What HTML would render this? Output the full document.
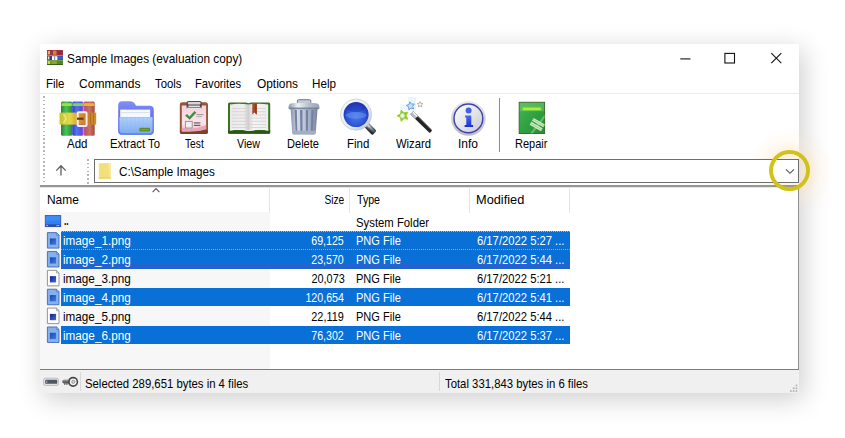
<!DOCTYPE html>
<html lang="en">
<head>
<meta charset="utf-8">
<title>Sample Images (evaluation copy)</title>
<style>
html,body{margin:0;padding:0;}
body{width:845px;height:438px;position:relative;overflow:hidden;background:#fff;
  font-family:"Liberation Sans",Arial,sans-serif;font-size:13px;line-height:13px;color:#000;}
.abs,.t,.sel,svg.i{position:absolute;}
.t{white-space:pre;display:block;}
#win{left:40px;top:44px;width:759px;height:349px;background:#fff;
  box-shadow:4px 6px 25px 0 rgba(0,0,0,.2);}
#glow{left:745.6px;top:126.5px;width:88px;height:88px;border-radius:50%;
  background:radial-gradient(closest-side,rgba(255,226,214,.4) 0,rgba(255,230,196,.5) 46%,rgba(255,236,210,.25) 68%,rgba(255,240,222,0) 100%);}
#menuline{left:40px;top:93px;width:759px;height:1px;background:#ececec;}
.grip{width:1.6px;background-image:repeating-linear-gradient(to bottom,#b6b6b6 0,#b6b6b6 1.6px,transparent 1.6px,transparent 3.85px);}
#tbsep{left:499px;top:98px;width:1px;height:54px;background:#8c8c8c;}
#addr{left:94px;top:159px;width:704.5px;height:23.5px;box-sizing:border-box;border:1px solid #6e6e6e;background:#fff;}
#listtop{left:40px;top:185.4px;width:759px;height:1.2px;background:#969696;}
#listtop2{left:40px;top:186.5px;width:759px;height:1px;background:#e6e6e6;}
#listright{left:798px;top:186px;width:1px;height:184px;background:#909090;}
#listbot{left:40px;top:369.2px;width:759px;height:1px;background:#7d7d7d;}
#namecol{left:40px;top:187px;width:229.5px;height:182px;background:#f7f7f7;}
#hdr{left:40px;top:187px;width:759px;height:25.4px;background:#fff;}
.cdiv{top:187px;width:1px;height:26px;background:#e5e5e5;}
.sel{left:61.3px;width:508.7px;background:#0870d6;}
#status{left:40px;top:370.2px;width:759px;height:22.8px;background:#f0f0f0;}
.sdiv{top:372px;width:1px;height:19px;background:#d7d7d7;}
#ring{left:769.3px;top:149.8px;width:40.6px;height:41.2px;box-sizing:border-box;border:4.5px solid #d0c216;border-radius:50%;}
</style>
</head>
<body>
<div id="win" class="abs"></div>
<div id="glow" class="abs"></div>

<!-- title bar -->
<svg class="i" style="left:47px;top:50px" width="16" height="15" viewBox="0 0 16 15">
  <rect x="0" y="0" width="16" height="5.2" fill="#a23344"/>
  <rect x="0.8" y="1" width="2.2" height="3.4" fill="#e9b43c"/>
  <rect x="6" y="0.6" width="3.4" height="4.2" fill="#d8802c"/>
  <rect x="11" y="1" width="4" height="3.6" fill="#94283e"/>
  <rect x="0" y="5.2" width="16" height="0.7" fill="#c43cc0"/>
  <rect x="0" y="5.9" width="16" height="4.3" fill="#3a3aa2"/>
  <rect x="11" y="6.2" width="5" height="3.6" fill="#3a5ec8"/>
  <rect x="5" y="6.2" width="5.4" height="3.8" fill="#fff"/>
  <rect x="7.2" y="6.4" width="1" height="3.4" fill="#777"/>
  <rect x="0.8" y="6.4" width="1.6" height="3" fill="#f0e6b0"/>
  <rect x="0" y="10.2" width="16" height="4.8" fill="#5a8a22"/>
  <rect x="0.8" y="11" width="2.4" height="3.2" fill="#d6d232"/>
  <rect x="4.4" y="11" width="5.5" height="3.2" fill="#8aa52c"/>
  <rect x="11.5" y="11" width="4" height="3.2" fill="#4c8a30"/>
  <rect x="0" y="14.3" width="16" height="0.7" fill="#2f4a18"/>
</svg>

<svg class="i" style="left:676px;top:48px" width="110" height="20" viewBox="0 0 110 20" fill="none" stroke="#111" stroke-width="1.1">
  <path d="M4.3 10.9h10.2"/>
  <rect x="48.9" y="5.4" width="9.6" height="9.6"/>
  <path d="M95.3 5.2l10 10M105.3 5.2l-10 10"/>
</svg>

<div id="menuline" class="abs"></div>

<!-- toolbar -->
<div class="abs grip" style="left:43.2px;top:96px;height:88px"></div>
<svg class="i" style="left:58px;top:99px" width="40" height="38" viewBox="0 0 40 38">
  <defs>
    <linearGradient id="agr" x1="0" x2="1" y1="0" y2="0"><stop offset="0" stop-color="#2a8038"/><stop offset=".45" stop-color="#4cc458"/><stop offset="1" stop-color="#2a8c3c"/></linearGradient>
    <linearGradient id="abl" x1="0" x2="1" y1="0" y2="0"><stop offset="0" stop-color="#3040c0"/><stop offset=".4" stop-color="#5474ee"/><stop offset=".8" stop-color="#5a50d8"/><stop offset="1" stop-color="#b84cc8"/></linearGradient>
    <linearGradient id="ard" x1="0" x2="1" y1="0" y2="0"><stop offset="0" stop-color="#c052c4"/><stop offset=".2" stop-color="#b85a5c"/><stop offset=".55" stop-color="#cc7264"/><stop offset="1" stop-color="#a04a44"/></linearGradient>
    <linearGradient id="abe" x1="0" x2="1" y1="0" y2="0"><stop offset="0" stop-color="#c2c232"/><stop offset=".28" stop-color="#e6d844"/><stop offset=".5" stop-color="#d8a02c"/><stop offset=".72" stop-color="#cc7a24"/><stop offset="1" stop-color="#c8902a"/></linearGradient>
  </defs>
  <rect x="3" y="2.500" width="11.200" height="34.300" rx="1.500" fill="url(#agr)"/>
  <rect x="14.200" y="2.500" width="11.200" height="34.300" rx="1.500" fill="url(#abl)"/>
  <rect x="25.400" y="2.500" width="11.300" height="34.300" rx="1.500" fill="url(#ard)"/>
  <rect x="3.400" y="4.200" width="10.400" height="2.800" fill="#a4de3c"/>
  <rect x="14.600" y="4.200" width="10.400" height="2.800" fill="#7cd458"/>
  <rect x="25.800" y="4.200" width="10.500" height="2.800" fill="#f0b42c"/>
  <rect x="1.600" y="13.600" width="36.600" height="12" fill="url(#abe)"/>
  <path d="M5.500 15.400q4.600 4.200 0 8.400" fill="none" stroke="#f2ec84" stroke-width="1.800" opacity=".8"/>
  <path d="M29.500 14v11.200M32.500 14v11.200M35.500 14v11.200" stroke="#a85c1c" stroke-width="1" opacity=".55"/>
  <rect x="19.700" y="13.200" width="8.900" height="13.800" rx="1" fill="none" stroke="#f8eef4" stroke-width="2"/>
  <rect x="19" y="18.600" width="6.600" height="2.200" fill="#6a3c1c"/>
</svg>

<svg class="i" style="left:116px;top:99px" width="40" height="38" viewBox="0 0 40 38">
  <defs>
    <linearGradient id="efr" x1="0" x2="0" y1="0" y2="1"><stop offset="0" stop-color="#b2d2fa"/><stop offset="1" stop-color="#7aa8f0"/></linearGradient>
    <linearGradient id="eba" x1="0" x2="0" y1="0" y2="1"><stop offset="0" stop-color="#8290f6"/><stop offset=".35" stop-color="#6a76f0"/><stop offset="1" stop-color="#6470ec"/></linearGradient>
  </defs>
  <path d="M2.200 6.200q0-4 4-4h8.500q3 0 4.400 2.800l.9 1.800H33.800q4 0 4 4V31.700q0 4-4 4H6.200q-4 0-4-4z" fill="url(#eba)"/>
  <rect x="4.200" y="10.600" width="30" height="9.400" fill="#f6f9ff"/>
  <rect x="4.200" y="13.200" width="30" height=".9" fill="#d2def4"/>
  <path d="M2.200 17.900h35.600V31.700q0 4-4 4H6.200q-4 0-4-4z" fill="url(#efr)"/>
  <path d="M2.200 17.900h35.600v1.200H2.200z" fill="#a4c4f6"/>
  <path d="M7 19v15M11 19v15M15 19v15M19 19v15M23 19v10M27 19v10M31 19v10M35 19v10" stroke="#8fb6f2" stroke-width=".8" opacity=".55"/>
  <rect x="23.800" y="29.300" width="9.800" height="2.600" rx=".5" fill="#78ac1c" stroke="#466e12" stroke-width=".7"/>
  <path d="M2.200 31.700q0 4 4 4h27.600q4 0 4-4V18h-1.300V31.200q0 3-3 3H6.500q-3 0-3-3V18H2.200z" fill="#6472ea" opacity=".85"/>
</svg>

<svg class="i" style="left:177px;top:99px" width="34" height="38" viewBox="0 0 34 38">
  <defs>
    <linearGradient id="tpa" x1="0" x2="0" y1="0" y2="1"><stop offset="0" stop-color="#f6d2dc"/><stop offset=".7" stop-color="#fae4ea"/><stop offset="1" stop-color="#f0b6c6"/></linearGradient>
  </defs>
  <rect x="2.800" y="3.300" width="28.200" height="31.700" rx="2.600" fill="#96563a"/>
  <rect x="2.800" y="31" width="28.200" height="4" rx="2" fill="#7c4228"/>
  <path d="M4.800 6.500h24.300v23.600q-6.500 2.500-14.500 1.900l-9.800.6z" fill="url(#tpa)"/>
  <path d="M4.800 28.400q10 3.400 24.300-2.400v4.100q-8.500 3.300-24.300 2.500z" fill="#e9a4b8"/>
  <path d="M9.600 3.800q0-1.800 1.800-1.800h11.500q1.800 0 1.800 1.800V10H9.600z" fill="#55474a"/>
  <rect x="10.800" y="3" width="12.700" height="2.400" rx=".8" fill="#d8d4da"/>
  <rect x="11.400" y="6.600" width="11.500" height="1.300" fill="#f4f0f4"/>
  <rect x="9.600" y="8.600" width="15.100" height="1.400" fill="#e6dfe4"/>
  <path d="M8.300 16.600l1.700-1.500 2.500 2.300 5-5.400 1.700 1.400-6.500 7z" fill="#2a9a38"/>
  <path d="M8.300 16.600l4.400 3.800 6.500-7" fill="none" stroke="#6a3a2a" stroke-width=".5" opacity=".6"/>
  <rect x="19.400" y="15.100" width="7" height="1" fill="#9a9296"/>
  <rect x="19.400" y="17.100" width="5.600" height="1" fill="#b4acb0"/>
  <rect x="8.400" y="22.400" width="6.800" height="6.600" fill="#f4eef0" stroke="#958d92" stroke-width=".9"/>
  <rect x="16.800" y="23.400" width="6.600" height="1.100" fill="#5a5056"/>
  <rect x="16.800" y="25.800" width="6.600" height="1.100" fill="#5a5056"/>
</svg>

<svg class="i" style="left:226px;top:99px" width="46" height="38" viewBox="0 0 46 38">
  <defs>
    <linearGradient id="vpl" x1="0" x2="1" y1="0" y2="0"><stop offset="0" stop-color="#e9e9e9"/><stop offset=".7" stop-color="#efefef"/><stop offset="1" stop-color="#c9c9c9"/></linearGradient>
    <linearGradient id="vpr" x1="0" x2="1" y1="0" y2="0"><stop offset="0" stop-color="#d2d2d2"/><stop offset=".25" stop-color="#f4f4f4"/><stop offset="1" stop-color="#ededed"/></linearGradient>
  </defs>
  <path d="M2 5q0-1.500 1.500-1.500H20l2.600.7 2.600-.7H42.700q1.500 0 1.500 1.500V33.200q0 1.500-1.500 1.500H3.500q-1.500 0-1.500-1.500z" fill="#3c7222"/>
  <path d="M2 31.400h42.200v1.800q0 1.500-1.500 1.500H3.500q-1.500 0-1.500-1.500z" fill="#2a5616"/>
  <path d="M4 5.400q9.300-1.500 19 .2V32q-9.700-2.200-19-.6z" fill="url(#vpl)"/>
  <path d="M22.600 5.600q9.800-1.700 19.600-.2V31.400q-9.800-1.600-19.600.6z" fill="url(#vpr)"/>
  <path d="M4 30.600q9.300-1.600 18.600.6 9.800-2.200 19.600-.6v.8q-9.800-1.600-19.600.6-9.300-2.200-18.600-.6z" fill="#fafafa"/>
  <g stroke="#d0d0d0" stroke-width=".8">
    <path d="M6 9.500h14.600M6 12.700h14.600M6 15.900h14.600M6 19.100h14.600M6 22.300h14.600M6 25.500h14.600M6 28.500h14.600"/>
    <path d="M25 9.500h15M25 12.700h15M25 15.900h15M25 19.100h15M25 22.300h15M25 25.500h15M25 28.500h15"/>
  </g>
  <path d="M26.300 4.400h4.400v11.200l-2.200-2.200-2.200 2.200z" fill="#a8482a"/>
  <path d="M29.300 4.400h1.400v11.200l-1.400-1.400z" fill="#8a3418"/>
</svg>

<svg class="i" style="left:286px;top:97px" width="36" height="40" viewBox="0 0 36 40">
  <defs>
    <linearGradient id="dbo" x1="0" x2="1" y1="0" y2="0"><stop offset="0" stop-color="#8692aa"/><stop offset=".25" stop-color="#d4dae8"/><stop offset=".6" stop-color="#b4bdd0"/><stop offset="1" stop-color="#77839b"/></linearGradient>
    <linearGradient id="dli" x1="0" x2="1" y1="0" y2="0"><stop offset="0" stop-color="#8e98ac"/><stop offset=".3" stop-color="#eef1f6"/><stop offset=".65" stop-color="#b8c0d0"/><stop offset="1" stop-color="#98a2b6"/></linearGradient>
  </defs>
  <rect x="11.400" y="2.700" width="13.400" height="4" rx="1.200" fill="#c4cad6" stroke="#6e788c" stroke-width="1"/>
  <path d="M4.600 11.600h27L29.800 35q-.2 2.600-2.800 2.600H9q-2.600 0-2.800-2.600z" fill="url(#dbo)"/>
  <g fill="#7382a0">
    <path d="M8.600 13h2.200l.5 21H9.600z"/>
    <path d="M14 13h2.400l.1 21h-2.100z"/>
    <path d="M19.800 13h2.400l-.3 21h-2z"/>
    <path d="M25.400 13h2.300l-.9 21h-1.900z"/>
  </g>
  <path d="M6.100 33.800h23.800l-.1 1.200q-.2 2.600-2.800 2.600H9q-2.600 0-2.800-2.600z" fill="#a4aec2"/>
  <path d="M2.600 9.400q0-3.400 6-3.400h18.800q6 0 6 3.400v1.400q0 1.400-1.400 1.400H4q-1.400 0-1.400-1.400z" fill="url(#dli)"/>
  <path d="M2.600 10.400q0 1.800 1.400 1.800h28q1.400 0 1.400-1.800z" fill="#6f7b92" opacity=".85"/>
</svg>

<svg class="i" style="left:338px;top:97px" width="42" height="42" viewBox="0 0 42 42">
  <defs>
    <radialGradient id="fle" cx=".5" cy=".58" r=".6"><stop offset="0" stop-color="#4a7ce8"/><stop offset=".6" stop-color="#2e56d8"/><stop offset="1" stop-color="#1c2cac"/></radialGradient>
    <linearGradient id="fri" x1="0" x2="1" y1="0" y2="1"><stop offset="0" stop-color="#fafcfc"/><stop offset=".6" stop-color="#e4eaec"/><stop offset="1" stop-color="#b4c0c6"/></linearGradient>
    <linearGradient id="fha" x1="0" x2="0" y1="0" y2="1"><stop offset="0" stop-color="#6a747a"/><stop offset=".35" stop-color="#dfe5e8"/><stop offset=".7" stop-color="#59636a"/><stop offset="1" stop-color="#1e2428"/></linearGradient>
    <linearGradient id="fhe" x1="0" x2="1" y1="0" y2="0"><stop offset="0" stop-color="#000" stop-opacity="0"/><stop offset="1" stop-color="#101418" stop-opacity=".75"/></linearGradient>
  </defs>
  <g transform="translate(27.300 26.800) rotate(45)">
    <rect x="0" y="-3" width="13" height="6" rx="1.600" fill="url(#fha)"/>
    <rect x="4" y="-3" width="9" height="6" rx="1.600" fill="url(#fhe)"/>
  </g>
  <circle cx="18.100" cy="17.600" r="15.600" fill="url(#fri)" stroke="#c0c8cc" stroke-width=".7"/>
  <circle cx="18.100" cy="17.600" r="12.500" fill="url(#fle)"/>
  <ellipse cx="18.100" cy="10.500" rx="9" ry="4.500" fill="#1e30b0" opacity=".45"/>
  <ellipse cx="18.100" cy="18.300" rx="10.500" ry="3.400" fill="#6c9af0" opacity=".5"/>
</svg>

<svg class="i" style="left:394px;top:97px" width="42" height="40" viewBox="0 0 42 40">
  <defs>
    <radialGradient id="wgs" cx=".5" cy=".5" r=".5"><stop offset="0" stop-color="#ffffff"/><stop offset=".3" stop-color="#d8f4c4"/><stop offset=".62" stop-color="#62c444"/><stop offset="1" stop-color="#a6d424"/></radialGradient>
  </defs>
  <rect x="14" y="0" width="8" height="13.500" fill="#e4f8fc"/>
  <rect x="6" y="7.500" width="8" height="6" fill="#e9f9fb"/>
  <path d="M16.300 17.200l2.900-2.900 18.300 18.100q.9 1-.2 2.200l-.6.600q-1.100.9-2.100-.100z" fill="#232325"/>
  <path d="M16.300 17.200l2.900-2.900 4.700 4.700-2.900 2.900z" fill="#b9bec4"/>
  <path d="M18.500 15.700l.9-.9 4.400 4.400-.9.900z" fill="#ffffff" opacity=".9"/>
  <path d="M23.600 19.800l.8-.8 13 12.900-.8.800z" fill="#8a8a8e" opacity=".55"/>
  <path d="M3.00 18.70L6.57 16.94L7.15 12.99L9.93 15.85L13.85 15.17L12.00 18.70L13.85 22.23L9.93 21.55L7.15 24.41L6.57 20.46z" fill="url(#wgs)" stroke="#a2d026" stroke-width="1" stroke-linejoin="round"/>
  <path d="M15.85 4.77L17.52 7.11L20.40 6.98L18.68 9.29L19.69 11.99L16.96 11.07L14.72 12.86L14.75 9.99L12.34 8.40L15.09 7.54z" fill="#b6e6fc" stroke="#8496e6" stroke-width="1" stroke-linejoin="round"/>
  <path d="M26.10 4.50L26.95 6.33L28.95 6.57L27.48 7.95L27.86 9.93L26.10 8.95L24.34 9.93L24.72 7.95L23.25 6.57L25.25 6.33z" fill="#fbf7f3" stroke="#b6a696" stroke-width=".85" stroke-linejoin="round"/>
</svg>

<svg class="i" style="left:449px;top:98.700px" width="40" height="40" viewBox="0 0 40 40">
  <defs>
    <linearGradient id="iou" x1="0" x2="0" y1="0" y2="1"><stop offset="0" stop-color="#e8e8ee"/><stop offset="1" stop-color="#bcbcc8"/></linearGradient>
    <linearGradient id="iin" x1="0" x2="1" y1="0" y2="1"><stop offset="0" stop-color="#ffffff"/><stop offset=".45" stop-color="#e6e8ec"/><stop offset="1" stop-color="#c6c8d2"/></linearGradient>
    <linearGradient id="iii" x1="0" x2="0" y1="0" y2="1"><stop offset="0" stop-color="#4a68f0"/><stop offset="1" stop-color="#1c2cd0"/></linearGradient>
  </defs>
  <circle cx="19.400" cy="19.400" r="17.300" fill="url(#iou)"/>
  <circle cx="19.400" cy="19.400" r="14.400" fill="url(#iin)" stroke="#4040ac" stroke-width="1.400"/>
  <circle cx="19.600" cy="11.400" r="3" fill="#4460ea"/>
  <path d="M16.100 16.400h6.200v9.500h1.800v2.100h-8.500v-2.100h1.700v-7.400h-1.200z" fill="url(#iii)"/>
</svg>

<div id="tbsep" class="abs"></div>
<svg class="i" style="left:517px;top:100px" width="30" height="36" viewBox="0 0 30 36">
  <defs>
    <linearGradient id="rbg" x1="0" x2="1" y1="0" y2="1"><stop offset="0" stop-color="#44b650"/><stop offset=".55" stop-color="#2fa042"/><stop offset="1" stop-color="#278c38"/></linearGradient>
  </defs>
  <rect x="2.200" y="2.300" width="25.400" height="31.200" fill="url(#rbg)" stroke="#3a6c2a" stroke-width="1"/>
  <rect x="2.700" y="2.800" width="24.400" height="8.400" fill="#7cc878" opacity=".45"/>
  <rect x="4.600" y="6.800" width="20.400" height="4.200" rx="2.100" fill="#8ee03a" opacity=".45"/>
  <rect x="5.800" y="7.700" width="18" height="2.400" rx="1.200" fill="#aaf030"/>
  <path d="M13 33.500l14.600-19v3.600L15.800 33.500z" fill="#6cc46c" opacity=".85"/>
  <g transform="rotate(30 20.300 24.600)">
    <rect x="13.800" y="20.600" width="13" height="3.400" fill="#cfe8c0"/>
    <rect x="13.800" y="25.200" width="13" height="3.400" fill="#cfe8c0"/>
    <path d="M13.800 22.300h13M13.800 26.900h13" stroke="#9cc890" stroke-width=".7"/>
  </g>
</svg>


<!-- address row -->
<div class="abs grip" style="left:87.4px;top:158.6px;height:25.5px"></div>
<svg class="i" style="left:54px;top:163px" width="14" height="14" viewBox="0 0 14 14" fill="none" stroke="#5f5f5f" stroke-width="1.3">
  <path d="M7 12.6V2.6M2.3 7.6L7 2.7l4.7 4.9"/>
</svg>
<div id="addr" class="abs"></div>
<svg class="i" style="left:98px;top:162px" width="15" height="18" viewBox="0 0 15 18">
  <path d="M0.8 1.2h9.2l3 0v15.4H0.8z" fill="#f3df7c"/>
  <path d="M10.2 1.2h2.8v15.4h-1.4V9z" fill="#f8ecaa"/>
  <path d="M0.8 15.6h12.2v1H0.8z" fill="#e6cf5e"/>
</svg>
<svg class="i" style="left:783px;top:166px" width="14" height="10" viewBox="0 0 14 10" fill="none" stroke="#555" stroke-width="1.15">
  <path d="M3 3.300L7 7.300l4-4"/>
</svg>

<!-- list -->
<div id="namecol" class="abs"></div>
<div id="hdr" class="abs"></div>
<div id="listtop2" class="abs"></div>
<div id="listtop" class="abs"></div>
<div id="listright" class="abs"></div>
<div id="listbot" class="abs"></div>
<div class="abs cdiv" style="left:269px"></div>
<div class="abs cdiv" style="left:349px"></div>
<div class="abs cdiv" style="left:469px"></div>
<div class="abs cdiv" style="left:569px"></div>
<svg class="i" style="left:150.700px;top:187.200px" width="10" height="7" viewBox="0 0 10 7" fill="none" stroke="#5c5c5c" stroke-width="1.150">
  <path d="M1.600 5.200L5 1.700l3.400 3.500"/>
</svg>
<div class="sel" style="top:231.32px;height:18.87px"></div>
<div class="sel" style="top:250.19px;height:18.30px"></div>
<div class="sel" style="top:287.93px;height:18.30px"></div>
<div class="sel" style="top:325.67px;height:18.30px"></div>
<div class="abs" style="left:61.3px;top:263.8px;width:508.7px;height:5.2px;background:#2462d0;"></div>
<div class="abs" style="left:61.3px;top:231.3px;width:508.7px;height:0;border-top:1px dotted #8fc0ee;"></div>
<div class="abs" style="left:61.3px;top:249.2px;width:508.7px;height:0;border-top:1px dotted #5fd08a;"></div>
<svg class="i" style="left:40px;top:210px" width="30" height="140" viewBox="40 210 30 140">
<defs><linearGradient id="lsq" x1="0" x2="1" y1="0" y2="1"><stop offset="0" stop-color="#16208a"/><stop offset="1" stop-color="#3f6ed8"/></linearGradient>
<linearGradient id="lsq2" x1="0" x2="1" y1="0" y2="1"><stop offset="0" stop-color="#1c46b0"/><stop offset="1" stop-color="#3f7ce0"/></linearGradient></defs>
<rect x="45.300" y="215.600" width="15.400" height="11" fill="#2f80f0" stroke="#3452b4" stroke-width=".9"/>
<rect x="45.800" y="216.100" width="14.400" height="4.500" fill="#3f8cf4"/>
<rect x="45.300" y="224.400" width="15.400" height="2.200" fill="#2c48a8"/>
<rect x="46.500" y="225" width="1.200" height="1" fill="#dfe8ff"/><rect x="56.600" y="225" width="1" height="1" fill="#dfe8ff"/><rect x="58.200" y="225" width="1" height="1" fill="#dfe8ff"/>
<path d="M47.4 232.62H56.40L59.0 235.22V248.12H47.4z" fill="#84b2ec" stroke="#4468bc" stroke-width=".9"/>
<path d="M56.40 232.62V235.22H59.0z" fill="#acccf4" stroke="#4468bc" stroke-width=".6"/>
<rect x="49.900" y="238.42" width="6.200" height="6.300" fill="url(#lsq2)"/>
<path d="M47.4 251.49H56.40L59.0 254.09V266.99H47.4z" fill="#84b2ec" stroke="#4468bc" stroke-width=".9"/>
<path d="M56.40 251.49V254.09H59.0z" fill="#acccf4" stroke="#4468bc" stroke-width=".6"/>
<rect x="49.900" y="257.29" width="6.200" height="6.300" fill="url(#lsq2)"/>
<path d="M47.4 270.36H56.40L59.0 272.96V285.86H47.4z" fill="#ffffff" stroke="#8a8a8a" stroke-width=".9"/>
<path d="M56.40 270.36V272.96H59.0z" fill="#e4e4e4" stroke="#8a8a8a" stroke-width=".6"/>
<rect x="49.900" y="276.16" width="6.200" height="6.300" fill="url(#lsq)"/>
<path d="M47.4 289.23H56.40L59.0 291.83V304.73H47.4z" fill="#84b2ec" stroke="#4468bc" stroke-width=".9"/>
<path d="M56.40 289.23V291.83H59.0z" fill="#acccf4" stroke="#4468bc" stroke-width=".6"/>
<rect x="49.900" y="295.03" width="6.200" height="6.300" fill="url(#lsq2)"/>
<path d="M47.4 308.10H56.40L59.0 310.70V323.60H47.4z" fill="#ffffff" stroke="#8a8a8a" stroke-width=".9"/>
<path d="M56.40 308.10V310.70H59.0z" fill="#e4e4e4" stroke="#8a8a8a" stroke-width=".6"/>
<rect x="49.900" y="313.90" width="6.200" height="6.300" fill="url(#lsq)"/>
<path d="M47.4 326.97H56.40L59.0 329.57V342.47H47.4z" fill="#84b2ec" stroke="#4468bc" stroke-width=".9"/>
<path d="M56.40 326.97V329.57H59.0z" fill="#acccf4" stroke="#4468bc" stroke-width=".6"/>
<rect x="49.900" y="332.77" width="6.200" height="6.300" fill="url(#lsq2)"/>
</svg>


<!-- status bar -->
<div id="status" class="abs"></div>
<div class="abs sdiv" style="left:80.3px"></div>
<div class="abs sdiv" style="left:439.2px"></div>
<svg class="i" style="left:42px;top:374px" width="40" height="16" viewBox="42 374 40 16">
  <rect x="43.600" y="378.200" width="14.800" height="7.200" rx="1.600" fill="#e6e6ea" stroke="#b4b6be" stroke-width=".9"/>
  <rect x="45.200" y="379.800" width="12" height="4" rx=".6" fill="#4e565e"/>
  <rect x="46" y="380.600" width="1.400" height="2.400" fill="#8a949c"/>
  <rect x="62.300" y="379.700" width="8" height="3.800" rx="1.700" fill="#5a5a5a"/>
  <rect x="63" y="380.300" width="6.500" height="1" fill="#a4a4a4"/>
  <path d="M64 383.300h1.400v1.500H64zM66.200 383.300h1.500v1.500h-1.500z" fill="#5a5a5a"/>
  <circle cx="73.100" cy="381.800" r="5.100" fill="#484848"/>
  <circle cx="73.200" cy="381.800" r="3.400" fill="#f6f6f6"/>
  <circle cx="73.300" cy="381.800" r="1.600" fill="#cfcfcf" stroke="#8c8c8c" stroke-width=".8"/>
</svg>
<svg class="i" style="left:788px;top:383px" width="10" height="10" viewBox="0 0 10 10" fill="#b4b4b4">
  <rect x="7.600" y="1.600" width="1.700" height="1.700"/>
  <rect x="4.800" y="4.400" width="1.700" height="1.700"/><rect x="7.600" y="4.400" width="1.700" height="1.700"/>
  <rect x="2" y="7.200" width="1.700" height="1.700"/><rect x="4.800" y="7.200" width="1.700" height="1.700"/><rect x="7.600" y="7.200" width="1.700" height="1.700"/>
</svg>


<span class="t" style="left:67.48px;top:52.00px;transform:scaleX(0.9083);transform-origin:0 0;">Sample Images (evaluation copy)</span>
<span class="t" style="left:45.58px;top:77.00px;transform:scaleX(0.8827);transform-origin:0 0;">File</span>
<span class="t" style="left:78.50px;top:77.00px;transform:scaleX(0.9252);transform-origin:0 0;">Commands</span>
<span class="t" style="left:154.50px;top:77.00px;transform:scaleX(0.8729);transform-origin:0 0;">Tools</span>
<span class="t" style="left:194.58px;top:77.00px;transform:scaleX(0.8603);transform-origin:0 0;">Favorites</span>
<span class="t" style="left:257.00px;top:77.00px;transform:scaleX(0.9149);transform-origin:0 0;">Options</span>
<span class="t" style="left:312.48px;top:77.00px;transform:scaleX(0.8972);transform-origin:0 0;">Help</span>
<span class="t" style="left:67.00px;top:137.00px;transform:scaleX(0.8859);transform-origin:0 0;">Add</span>
<span class="t" style="left:109.58px;top:137.00px;transform:scaleX(0.8686);transform-origin:0 0;">Extract To</span>
<span class="t" style="left:185.00px;top:137.00px;transform:scaleX(0.7864);transform-origin:0 0;">Test</span>
<span class="t" style="left:237.00px;top:137.00px;transform:scaleX(0.8228);transform-origin:0 0;">View</span>
<span class="t" style="left:287.48px;top:137.00px;transform:scaleX(0.8516);transform-origin:0 0;">Delete</span>
<span class="t" style="left:347.48px;top:137.00px;transform:scaleX(0.8811);transform-origin:0 0;">Find</span>
<span class="t" style="left:396.00px;top:137.00px;transform:scaleX(0.8652);transform-origin:0 0;">Wizard</span>
<span class="t" style="left:458.48px;top:137.00px;transform:scaleX(0.9222);transform-origin:0 0;">Info</span>
<span class="t" style="left:514.58px;top:137.00px;transform:scaleX(0.8486);transform-origin:0 0;">Repair</span>
<span class="t" style="left:118.75px;top:165.30px;transform:scaleX(0.8954);transform-origin:0 0;">C:\Sample Images</span>
<span class="t" style="left:46.58px;top:193.00px;transform:scaleX(0.9177);transform-origin:0 0;">Name</span>
<span class="t" style="left:318.97px;top:193.00px;transform:scaleX(0.7846);transform-origin:100% 0;">Size</span>
<span class="t" style="left:357.00px;top:193.00px;transform:scaleX(0.8160);transform-origin:0 0;">Type</span>
<span class="t" style="left:476.25px;top:193.00px;transform:scaleX(0.9821);transform-origin:0 0;">Modified</span>
<span class="t" style="left:64.10px;top:214.25px;transform:scaleX(0.6359);transform-origin:0 0;font-weight:700;">..</span>
<span class="t" style="left:356.48px;top:215.55px;transform:scaleX(0.8710);transform-origin:0 0;">System Folder</span>
<span class="t" style="left:63.03px;top:234.42px;transform:scaleX(0.9004);transform-origin:0 0;color:#fff;">image_1.png</span>
<span class="t" style="left:303.98px;top:234.42px;transform:scaleX(0.8173);transform-origin:100% 0;color:#fff;">69,125</span>
<span class="t" style="left:356.48px;top:234.42px;transform:scaleX(0.8500);transform-origin:0 0;color:#fff;">PNG File</span>
<span class="t" style="left:476.73px;top:234.42px;transform:scaleX(0.8646);transform-origin:0 0;color:#fff;">6/17/2022 5:27 ...</span>
<span class="t" style="left:63.03px;top:253.29px;transform:scaleX(0.9004);transform-origin:0 0;color:#fff;">image_2.png</span>
<span class="t" style="left:303.98px;top:253.29px;transform:scaleX(0.8173);transform-origin:100% 0;color:#fff;">23,570</span>
<span class="t" style="left:356.48px;top:253.29px;transform:scaleX(0.8500);transform-origin:0 0;color:#fff;">PNG File</span>
<span class="t" style="left:476.73px;top:253.29px;transform:scaleX(0.8646);transform-origin:0 0;color:#fff;">6/17/2022 5:44 ...</span>
<span class="t" style="left:63.03px;top:272.16px;transform:scaleX(0.9004);transform-origin:0 0;">image_3.png</span>
<span class="t" style="left:304.74px;top:272.16px;transform:scaleX(0.8392);transform-origin:100% 0;">20,073</span>
<span class="t" style="left:356.48px;top:272.16px;transform:scaleX(0.8500);transform-origin:0 0;">PNG File</span>
<span class="t" style="left:476.73px;top:272.16px;transform:scaleX(0.8646);transform-origin:0 0;">6/17/2022 5:21 ...</span>
<span class="t" style="left:63.03px;top:291.03px;transform:scaleX(0.9004);transform-origin:0 0;color:#fff;">image_4.png</span>
<span class="t" style="left:296.75px;top:291.03px;transform:scaleX(0.8213);transform-origin:100% 0;color:#fff;">120,654</span>
<span class="t" style="left:356.48px;top:291.03px;transform:scaleX(0.8500);transform-origin:0 0;color:#fff;">PNG File</span>
<span class="t" style="left:476.73px;top:291.03px;transform:scaleX(0.8646);transform-origin:0 0;color:#fff;">6/17/2022 5:41 ...</span>
<span class="t" style="left:63.03px;top:309.90px;transform:scaleX(0.9004);transform-origin:0 0;">image_5.png</span>
<span class="t" style="left:304.95px;top:309.90px;transform:scaleX(0.8377);transform-origin:100% 0;">22,119</span>
<span class="t" style="left:356.48px;top:309.90px;transform:scaleX(0.8500);transform-origin:0 0;">PNG File</span>
<span class="t" style="left:476.73px;top:309.90px;transform:scaleX(0.8646);transform-origin:0 0;">6/17/2022 5:44 ...</span>
<span class="t" style="left:63.03px;top:328.77px;transform:scaleX(0.9004);transform-origin:0 0;color:#fff;">image_6.png</span>
<span class="t" style="left:303.98px;top:328.77px;transform:scaleX(0.8173);transform-origin:100% 0;color:#fff;">76,302</span>
<span class="t" style="left:356.48px;top:328.77px;transform:scaleX(0.8500);transform-origin:0 0;color:#fff;">PNG File</span>
<span class="t" style="left:476.73px;top:328.77px;transform:scaleX(0.8646);transform-origin:0 0;color:#fff;">6/17/2022 5:37 ...</span>
<span class="t" style="left:84.58px;top:377.20px;transform:scaleX(0.8721);transform-origin:0 0;">Selected 289,651 bytes in 4 files</span>
<span class="t" style="left:445.00px;top:377.20px;transform:scaleX(0.8716);transform-origin:0 0;">Total 331,843 bytes in 6 files</span>

<!-- highlight ring -->
<div id="ring" class="abs"></div>
</body>
</html>
